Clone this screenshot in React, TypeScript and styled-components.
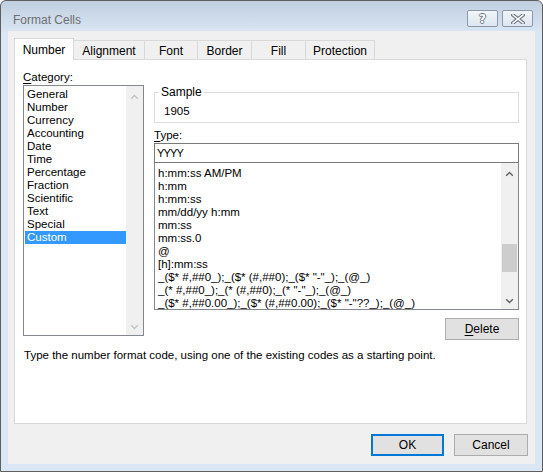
import React from "react";
import styled, { createGlobalStyle } from "styled-components";

const GlobalStyle = createGlobalStyle`
  html, body {
    margin: 0;
    padding: 0;
    background: #ffffff;
  }
  body {
    font-family: "Liberation Sans", Arial, sans-serif;
    font-size: 11.5px;
    color: #000000;
  }
  * {
    box-sizing: border-box;
  }
`;

const Window = styled.div`
  width: 543px;
  height: 472px;
  border: 1px solid #5e5e5e;
  border-radius: 6px 6px 0 0;
  background: linear-gradient(#c0cfe0 0px, #d3e0ef 24px, #dae6f3 31px, #dae6f3 100%);
  display: flex;
  flex-direction: column;
  overflow: hidden;
`;

const TitleBar = styled.div`
  height: 30px;
  display: flex;
  align-items: flex-start;
  padding: 9px 9px 0 12px;
`;

const TitleText = styled.div`
  flex: 1;
  color: #6f6f6f;
  font-size: 12px;
  line-height: 22px;
  margin-top: -1px;
`;

const CaptionButtons = styled.div`
  display: flex;
  gap: 4px;
`;

const CaptionButton = styled.div`
  width: 31px;
  height: 17px;
  border: 1px solid #8c99a9;
  border-radius: 2px;
  background: linear-gradient(#f1f5f9, #dde6ef);
  display: flex;
  align-items: center;
  justify-content: center;
  font-family: "DejaVu Sans", sans-serif;
  font-weight: bold;
  font-size: 12px;
  line-height: 14px;
  color: #ffffff;
  text-shadow: 1px 0 0 #6d7784, -1px 0 0 #6d7784, 0 1px 0 #6d7784, 0 -1px 0 #6d7784;
`;

const Client = styled.div`
  flex: 1;
  margin: 0 7px 7px;
  background: #f0f0f0;
  display: flex;
  flex-direction: column;
  padding: 7px 8px 8px 6px;
`;

const TabStrip = styled.div`
  height: 21px;
  display: flex;
  align-items: flex-end;
`;

const Tab = styled.div<{ $w: number; $active?: boolean }>`
  position: relative;
  z-index: ${(p) => (p.$active ? 2 : 1)};
  width: ${(p) => p.$w}px;
  height: ${(p) => (p.$active ? 22 : 19)}px;
  margin-bottom: ${(p) => (p.$active ? -1 : 0)}px;
  margin-left: -1px;
  &:first-child {
    margin-left: 0;
  }
  border: 1px solid #d9d9d9;
  border-bottom: none;
  background: ${(p) => (p.$active ? "#ffffff" : "#f0f0f0")};
  display: flex;
  align-items: center;
  justify-content: center;
  padding-top: ${(p) => (p.$active ? 0 : 1)}px;
  font-size: 12px;
`;

const Panel = styled.div`
  height: 365px;
  border: 1px solid #d9d9d9;
  background: #ffffff;
  padding: 10px 7px 0 8px;
  display: grid;
  grid-template-columns: 121px 365px;
  column-gap: 10px;
  align-content: start;
`;

const Column = styled.div`
  display: flex;
  flex-direction: column;
`;

const Label = styled.div`
  line-height: 15px;
  height: 15px;
`;

const Key = styled.span`
  text-decoration: underline;
  text-underline-offset: 2px;
`;

const ListBox = styled.div<{ $h: number }>`
  height: ${(p) => p.$h}px;
  border: 1px solid #828790;
  background: #ffffff;
  display: flex;
  overflow: hidden;
`;

const Items = styled.div<{ $pt: number; $pl: number }>`
  flex: 1;
  min-width: 0;
  padding: ${(p) => p.$pt}px 0 0 ${(p) => p.$pl}px;
  overflow: hidden;
`;

const Item = styled.div<{ $selected?: boolean }>`
  height: 13px;
  line-height: 13px;
  padding-left: 2px;
  white-space: nowrap;
  background: ${(p) => (p.$selected ? "#3399ff" : "transparent")};
  color: ${(p) => (p.$selected ? "#ffffff" : "#000000")};
`;

const CodeItem = styled.div`
  height: 13px;
  line-height: 13px;
  white-space: nowrap;
`;

const ScrollBar = styled.div`
  width: 17px;
  flex: none;
  background: #f0f0f0;
  display: flex;
  flex-direction: column;
  padding-top: 2px;
`;

const ArrowBox = styled.div`
  height: 17px;
  flex: none;
  display: flex;
  align-items: center;
  justify-content: center;
`;

const Track = styled.div`
  flex: 1;
  position: relative;
`;

const Thumb = styled.div`
  position: absolute;
  left: 1px;
  right: 1px;
  background: #cdcdcd;
`;

const SampleBox = styled.fieldset`
  margin: 15px 0 0;
  height: 38px;
  padding: 0 4px 0 4px;
  border: 1px solid #dcdcdc;
  min-width: 0;
`;

const SampleLegend = styled.legend`
  padding: 0 2px;
  line-height: 15px;
  font-size: 12px;
`;

const SampleValue = styled.div`
  padding-left: 5px;
  margin-top: 4px;
  line-height: 15px;
`;

const TypeLabel = styled(Label)`
  margin-top: 5px;
`;

const TypeInput = styled.div`
  height: 20px;
  border: 1px solid #7a7a7a;
  padding-left: 2px;
  line-height: 18px;
  font-size: 11px;
  letter-spacing: -0.8px;
  position: relative;
  z-index: 1;
`;

const CodeListBox = styled(ListBox)`
  margin-top: -1px;
`;

const Button = styled.div<{ $w: number; $default?: boolean }>`
  width: ${(p) => p.$w}px;
  height: 22px;
  background: #e1e1e1;
  border: ${(p) => (p.$default ? "2px solid #0078d7" : "1px solid #adadad")};
  display: flex;
  align-items: center;
  justify-content: center;
  font-size: 12px;
`;

const DeleteButton = styled(Button)`
  align-self: flex-end;
  margin-top: 8px;
`;

const Description = styled.div`
  grid-column: 1 / -1;
  margin-top: 8px;
  padding-left: 1px;
  line-height: 15px;
`;

const Footer = styled.div`
  margin: 10px -1px 0 0;
  display: flex;
  justify-content: flex-end;
  gap: 10px;
`;

const Chevron = ({ down, disabled }: { down?: boolean; disabled?: boolean }) => (
  <svg width="9" height="6" viewBox="0 0 9 6">
    <path
      d={down ? "M1.2 1.2 L4.5 4.5 L7.8 1.2" : "M1.2 4.8 L4.5 1.5 L7.8 4.8"}
      fill="none"
      stroke={disabled ? "#c3c3c3" : "#606060"}
      strokeWidth="1.4"
    />
  </svg>
);

const CloseGlyph = () => (
  <svg width="14" height="10" viewBox="0 0 14 10">
    <path d="M2 1 L12 9 M12 1 L2 9" stroke="#6d7784" strokeWidth="3.6" strokeLinecap="square" />
    <path d="M2 1 L12 9 M12 1 L2 9" stroke="#ffffff" strokeWidth="1.6" strokeLinecap="square" />
  </svg>
);

const tabs = [
  { name: "Number", w: 60 },
  { name: "Alignment", w: 72 },
  { name: "Font", w: 54 },
  { name: "Border", w: 55 },
  { name: "Fill", w: 55 },
  { name: "Protection", w: 70 },
];

const categories = [
  "General",
  "Number",
  "Currency",
  "Accounting",
  "Date",
  "Time",
  "Percentage",
  "Fraction",
  "Scientific",
  "Text",
  "Special",
  "Custom",
];

const codes = [
  "h:mm:ss AM/PM",
  "h:mm",
  "h:mm:ss",
  "mm/dd/yy h:mm",
  "mm:ss",
  "mm:ss.0",
  "@",
  "[h]:mm:ss",
  '_($* #,##0_);_($* (#,##0);_($* "-"_);_(@_)',
  '_(* #,##0_);_(* (#,##0);_(* "-"_);_(@_)',
  '_($* #,##0.00_);_($* (#,##0.00);_($* "-"??_);_(@_)',
];

export default function App() {
  return (
    <>
      <GlobalStyle />
      <Window>
        <TitleBar>
          <TitleText>Format Cells</TitleText>
          <CaptionButtons>
            <CaptionButton>?</CaptionButton>
            <CaptionButton>
              <CloseGlyph />
            </CaptionButton>
          </CaptionButtons>
        </TitleBar>
        <Client>
          <TabStrip>
            {tabs.map((t, i) => (
              <Tab key={t.name} $w={t.w} $active={i === 0}>
                {t.name}
              </Tab>
            ))}
          </TabStrip>
          <Panel>
            <Column>
              <Label>
                <Key>C</Key>ategory:
              </Label>
              <ListBox $h={251}>
                <Items $pt={2} $pl={1}>
                  {categories.map((c) => (
                    <Item key={c} $selected={c === "Custom"}>
                      {c}
                    </Item>
                  ))}
                </Items>
                <ScrollBar>
                  <ArrowBox>
                    <Chevron disabled />
                  </ArrowBox>
                  <Track />
                  <ArrowBox>
                    <Chevron down disabled />
                  </ArrowBox>
                </ScrollBar>
              </ListBox>
            </Column>
            <Column>
              <SampleBox>
                <SampleLegend>Sample</SampleLegend>
                <SampleValue>1905</SampleValue>
              </SampleBox>
              <TypeLabel>
                <Key>T</Key>ype:
              </TypeLabel>
              <TypeInput>YYYY</TypeInput>
              <CodeListBox $h={148}>
                <Items $pt={4} $pl={3}>
                  {codes.map((c) => (
                    <CodeItem key={c}>{c}</CodeItem>
                  ))}
                </Items>
                <ScrollBar>
                  <ArrowBox>
                    <Chevron />
                  </ArrowBox>
                  <Track>
                    <Thumb style={{ top: 62, height: 28 }} />
                  </Track>
                  <ArrowBox>
                    <Chevron down />
                  </ArrowBox>
                </ScrollBar>
              </CodeListBox>
              <DeleteButton $w={74}>
                <span>
                  <Key>D</Key>elete
                </span>
              </DeleteButton>
            </Column>
            <Description>
              Type the number format code, using one of the existing codes as a starting point.
            </Description>
          </Panel>
          <Footer>
            <Button $w={73} $default>
              OK
            </Button>
            <Button $w={74}>Cancel</Button>
          </Footer>
        </Client>
      </Window>
    </>
  );
}
